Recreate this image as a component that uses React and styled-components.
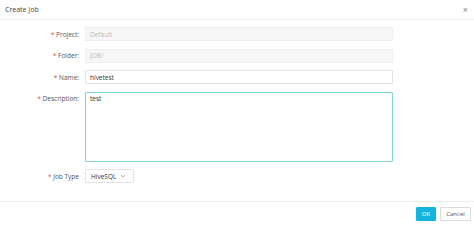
import React from 'react'
import styled, { createGlobalStyle } from 'styled-components'

const GlobalStyle = createGlobalStyle`
  html, body {
    margin: 0;
    padding: 0;
    background: #fff;
  }
  body {
    font-family: "Open Sans", "Noto Sans", sans-serif;
    color: #333;
  }
`

const fields = [
  { label: 'Project:', value: 'Default', disabled: true },
  { label: 'Folder:', value: 'JOB/', disabled: true },
  { label: 'Name:', value: 'hivetest' },
]

const App = () => {
  return (
    <Dialog>
      <GlobalStyle />
      <Header>
        <Title>Create Job</Title>
        <Close>×</Close>
      </Header>

      <Body>
        {fields.map((f) => (
          <Row key={f.label}>
            <Label><Star>*</Star> {f.label}</Label>
            <Input disabled={f.disabled} defaultValue={f.value} />
          </Row>
        ))}

        <Row $top>
          <Label $top><Star>*</Star> Description:</Label>
          <TextArea defaultValue="test" />
        </Row>

        <Row>
          <Label><Star>*</Star> Job Type</Label>
          <Select>
            <span>HiveSQL</span>
            <Chevron viewBox="0 0 10 10">
              <path d="M2.5 3.8 L5 6.2 L7.5 3.8" fill="none" stroke="#999" strokeWidth="1" />
            </Chevron>
          </Select>
        </Row>
      </Body>

      <Footer>
        <Button $primary>OK</Button>
        <Button>Cancel</Button>
      </Footer>
    </Dialog>
  )
}

export default App

const Dialog = styled.div`
    width: 474px;
    height: 226px;
    display: flex;
    flex-direction: column;
    background: #fff;
    `

const Header = styled.div`
    height: 20px;
    display: flex;
    align-items: center;
    justify-content: space-between;
    padding: 0 5px;
    border-bottom: 1px solid #ececec;
    box-sizing: border-box;
    `

const Title = styled.div`
    font-size: 7px;
    color: #444;
    `

const Close = styled.div`
    font-size: 9px;
    color: #888;
    line-height: 1;
    margin-right: 1px;
    `

const Body = styled.div`
    flex: 1;
    display: flex;
    flex-direction: column;
    gap: 7.5px;
    padding-top: 7px;
    `

const Row = styled.div`
    display: flex;
    align-items: ${(p) => (p.$top ? 'flex-start' : 'center')};
    `

const Label = styled.label`
    width: 85px;
    padding-right: 6px;
    box-sizing: border-box;
    text-align: right;
    font-size: 6.5px;
    color: #555;
    margin-top: ${(p) => (p.$top ? '2px' : '0')};
    `

const Star = styled.span`
    color: #e04f4f;
    `

const Input = styled.input`
    width: 308px;
    height: 14px;
    box-sizing: border-box;
    padding: 0 4px;
    font-family: inherit;
    font-size: 6.5px;
    color: #333;
    border: 1px solid #e3e3e3;
    border-radius: 1px;
    background: #fff;
    outline: none;
    &:disabled {
        background: #f6f6f6;
        border-color: #efefef;
        color: #bbb;
    }
    `

const TextArea = styled.textarea`
    width: 308px;
    height: 70px;
    box-sizing: border-box;
    padding: 1px 4px;
    font-family: inherit;
    font-size: 6.5px;
    color: #333;
    border: 1px solid #7fd6d6;
    border-radius: 1px;
    resize: none;
    outline: none;
    `

const Select = styled.div`
    width: 49px;
    height: 14px;
    box-sizing: border-box;
    padding: 0 3px 0 5px;
    display: flex;
    align-items: center;
    justify-content: space-between;
    border: 1px solid #e3e3e3;
    border-radius: 1px;
    font-size: 6.5px;
    color: #333;
    `

const Chevron = styled.svg`
    width: 8px;
    height: 8px;
    margin-right: 3px;
    `

const Footer = styled.div`
    height: 25px;
    border-top: 1px solid #ececec;
    box-sizing: border-box;
    display: flex;
    align-items: center;
    justify-content: flex-end;
    gap: 4px;
    padding: 0 3px 0 0;
    `

const Button = styled.button`
    height: 14px;
    min-width: ${(p) => (p.$primary ? '20px' : '31px')};
    padding: 0 4px;
    box-sizing: border-box;
    font-family: inherit;
    font-size: 6px;
    border-radius: 1px;
    border: 1px solid ${(p) => (p.$primary ? '#13b5dc' : '#dcdcdc')};
    background: ${(p) => (p.$primary ? '#13b5dc' : '#fff')};
    color: ${(p) => (p.$primary ? '#fff' : '#555')};
    `
